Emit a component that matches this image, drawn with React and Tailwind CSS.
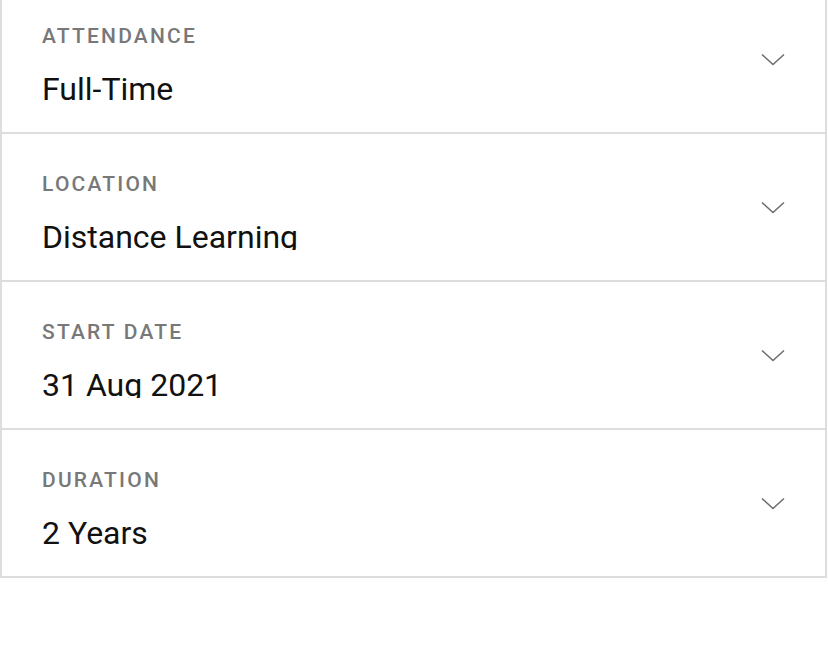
import React from 'react'

const FIELDS = [
  { label: 'Attendance', value: 'Full-Time' },
  { label: 'Location', value: 'Distance Learning' },
  { label: 'Start Date', value: '31 Aug 2021' },
  { label: 'Duration', value: '2 Years' },
]

const Chevron = () => (
  <svg width="24" height="13" viewBox="0 0 24 13" fill="none" className="shrink-0">
    <path d="M1 1.5 L12 11.5 L23 1.5" stroke="#6e6e6e" strokeWidth="1.6" />
  </svg>
)

const SelectRow = ({ label, value }) => (
  <div className="flex items-center justify-between h-[148px] border-b-2 border-[#dddddd] pl-[40px] pr-[40px]">
    <div className="self-start pt-[38px] min-w-0">
      <p className="text-[21px] leading-[24px] font-medium uppercase tracking-[2.2px] text-[#787878]">{label}</p>
      <div className="mt-[21px] h-[33px] overflow-hidden">
        <p className="text-[32px] leading-[40px] text-[#111111] whitespace-nowrap">{value}</p>
      </div>
    </div>
    <Chevron />
  </div>
)

export default function App() {
  return (
    <div className="w-[828px] h-[650px] bg-white overflow-hidden" style={{ fontFamily: 'Roboto, "Liberation Sans", sans-serif' }}>
      <div className="w-[827px] -mt-[14px] border-x-2 border-[#dddddd]">
        {FIELDS.map((f) => (
          <SelectRow key={f.label} label={f.label} value={f.value} />
        ))}
      </div>
    </div>
  )
}
